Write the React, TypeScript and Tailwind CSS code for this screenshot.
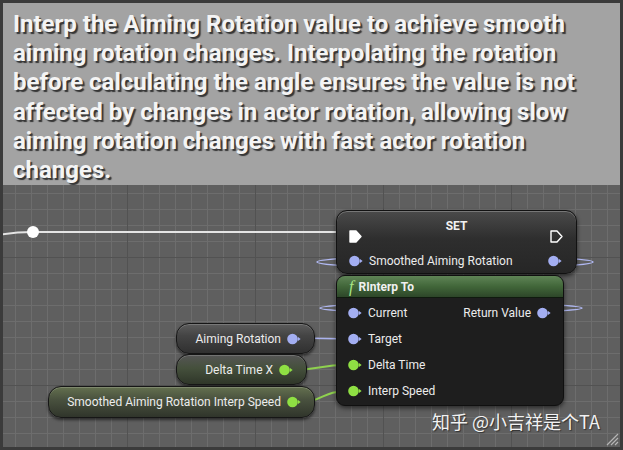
import React from "react";

type PinKind = "struct" | "float";

const pinFill: Record<PinKind, string> = {
  struct: "#a3aef2",
  float: "#8fe043",
};

function DataPin({ kind }: { kind: PinKind }) {
  return (
    <svg width="14" height="12" viewBox="0 0 14 12" className="shrink-0">
      <circle cx="5.5" cy="6" r="5.3" fill={pinFill[kind]} />
      <polygon points="11,4 13.6,6 11,8" fill={pinFill[kind]} />
    </svg>
  );
}

function ExecPin({ filled }: { filled: boolean }) {
  return (
    <svg width="13" height="13" viewBox="0 0 13 13" className="shrink-0">
      <path
        d="M1 1 H7 L12 6.5 L7 12 H1 Z"
        fill={filled ? "#ffffff" : "none"}
        stroke="#ffffff"
        strokeWidth="1.4"
        strokeLinejoin="round"
      />
    </svg>
  );
}

function VarGetter({
  label,
  kind,
  className,
}: {
  label: string;
  kind: PinKind;
  className: string;
}) {
  return (
    <div
      className={
        "absolute flex items-center justify-end gap-[6px] pr-[13px] rounded-[13px] border border-[#161616] shadow-[0_2px_3px_rgba(0,0,0,0.55),inset_0_1px_0_rgba(255,255,255,0.18)] text-[12px] text-[#ececec] " +
        className
      }
    >
      <span className="leading-none">{label}</span>
      <DataPin kind={kind} />
    </div>
  );
}

export default function App() {
  return (
    <div className="w-[623px] h-[450px] flex flex-col border-[3px] border-[#3b3b3b] bg-[#5f5f5f] overflow-hidden font-['Roboto','Liberation_Sans',sans-serif]">
      {/* comment bubble title */}
      <div className="h-[182px] shrink-0 bg-[#a3a3a3] px-[10px] pt-[7px] text-[24px] leading-[29.2px] font-bold text-[#f4f4f4] [text-shadow:2px_2px_1px_#353535]">
        Interp the Aiming Rotation value to achieve smooth
        <br />
        aiming rotation changes. Interpolating the rotation
        <br />
        before calculating the angle ensures the value is not
        <br />
        affected by changes in actor rotation, allowing slow
        <br />
        aiming rotation changes with fast actor rotation
        <br />
        changes.
      </div>

      {/* graph canvas */}
      <div className="relative flex-1 bg-[image:linear-gradient(to_right,#525252_1px,transparent_1px),linear-gradient(to_bottom,#525252_1px,transparent_1px),linear-gradient(to_right,#6d6d6d_1px,transparent_1px),linear-gradient(to_bottom,#6d6d6d_1px,transparent_1px)] bg-[size:128px_128px,128px_128px,16px_16px,16px_16px] bg-[position:124px_72px,124px_72px,12px_8px,12px_8px]">
        {/* wires */}
        <svg
          width="617"
          height="262"
          viewBox="0 0 617 262"
          className="absolute left-0 top-0"
        >
          <path
            d="M-4 50 Q12 47 30 47 L346 47"
            stroke="#e4e4e4"
            strokeWidth="2"
            fill="none"
          />
          <circle cx="30" cy="47" r="6" fill="#ffffff" />
          <ellipse
            cx="452"
            cy="77"
            rx="138"
            ry="6"
            stroke="#b0b8f2"
            strokeWidth="1.6"
            fill="none"
          />
          <ellipse
            cx="448"
            cy="123"
            rx="131"
            ry="5"
            stroke="#b0b8f2"
            strokeWidth="1.6"
            fill="none"
          />
          <path
            d="M294 153 C318 153 322 154 345 154"
            stroke="#aab2ee"
            strokeWidth="1.5"
            fill="none"
          />
          <path
            d="M286 185 C318 185 314 180 345 180"
            stroke="#8fd14f"
            strokeWidth="2"
            fill="none"
          />
          <path
            d="M294 217 C322 217 318 206 345 206"
            stroke="#8fd14f"
            strokeWidth="2"
            fill="none"
          />
        </svg>

        {/* SET node */}
        <div className="absolute left-[333px] top-[25px] w-[241px] h-[64px] rounded-[11px] border border-[#121212] bg-[linear-gradient(to_bottom,#4a4a4a,#2e2e2e_45%,#262626)] shadow-[0_2px_4px_rgba(0,0,0,0.6),inset_0_1px_0_rgba(255,255,255,0.25)] flex flex-col pt-[9px]">
          <div className="h-[13px] text-center text-[12px] leading-[13px] font-bold text-[#f2f2f2]">
            SET
          </div>
          <div className="flex items-center justify-between pl-[12px] pr-[13px] -mt-[3px] h-[13px]">
            <ExecPin filled />
            <ExecPin filled={false} />
          </div>
          <div className="flex items-center justify-between pl-[12px] pr-[14px] mt-[11px] h-[14px]">
            <div className="flex items-center gap-[6px]">
              <DataPin kind="struct" />
              <span className="text-[12px] leading-none text-[#ececec]">
                Smoothed Aiming Rotation
              </span>
            </div>
            <DataPin kind="struct" />
          </div>
        </div>

        {/* RInterp To node */}
        <div className="absolute left-[333px] top-[90px] w-[228px] h-[131px] rounded-[9px] border border-[#101010] bg-[#1e1e1e] shadow-[0_2px_5px_rgba(0,0,0,0.6)] flex flex-col overflow-hidden">
          <div className="h-[22px] shrink-0 flex items-center gap-[5px] pl-[12px] bg-[linear-gradient(to_bottom,#5f8456,#416639_50%,#2d4629)] border-b border-[#0f1a0e]">
            <span className="text-[16px] italic leading-none text-[#a9e786] font-['Liberation_Serif',serif]">
              f
            </span>
            <span className="text-[12px] font-bold leading-none text-[#f0f0f0]">
              RInterp To
            </span>
          </div>
          <div className="flex flex-col pt-[2px] text-[12px] text-[#ececec]">
            <div className="h-[26px] flex items-center justify-between pl-[11px] pr-[12px]">
              <div className="flex items-center gap-[6px]">
                <DataPin kind="struct" />
                <span className="leading-none">Current</span>
              </div>
              <div className="flex items-center gap-[6px]">
                <span className="leading-none">Return Value</span>
                <DataPin kind="struct" />
              </div>
            </div>
            <div className="h-[26px] flex items-center gap-[6px] pl-[11px]">
              <DataPin kind="struct" />
              <span className="leading-none">Target</span>
            </div>
            <div className="h-[26px] flex items-center gap-[6px] pl-[11px]">
              <DataPin kind="float" />
              <span className="leading-none">Delta Time</span>
            </div>
            <div className="h-[26px] flex items-center gap-[6px] pl-[11px]">
              <DataPin kind="float" />
              <span className="leading-none">Interp Speed</span>
            </div>
          </div>
        </div>

        {/* variable getters */}
        <VarGetter
          label="Aiming Rotation"
          kind="struct"
          className="left-[173px] top-[138px] w-[139px] h-[31px] bg-[linear-gradient(to_bottom,#5c5c5c,#444444_40%,#303030)]"
        />
        <VarGetter
          label="Delta Time X"
          kind="float"
          className="left-[173px] top-[169px] w-[131px] h-[31px] bg-[linear-gradient(to_bottom,#555555,#45503c_45%,#2f3629)]"
        />
        <VarGetter
          label="Smoothed Aiming Rotation Interp Speed"
          kind="float"
          className="left-[45px] top-[201px] w-[267px] h-[32px] bg-[linear-gradient(to_bottom,#64704f,#4a523f_40%,#30352b)]"
        />

        {/* watermark */}
        <div className="absolute left-[429px] top-[225px] text-[18px] leading-[22px] text-[#f2f2f2] [text-shadow:1px_1px_1px_rgba(0,0,0,0.5)] font-['Noto_Sans_CJK_SC','Noto_Sans',sans-serif]">
          知乎 @小吉祥是个TA
        </div>

        {/* resize grip */}
        <svg
          width="14"
          height="14"
          viewBox="0 0 14 14"
          className="absolute right-[1px] bottom-[1px]"
        >
          <path
            d="M13 2 L2 13 M13 6 L6 13 M13 10 L10 13"
            stroke="#b5b5b5"
            strokeWidth="1.2"
          />
        </svg>
      </div>
    </div>
  );
}
